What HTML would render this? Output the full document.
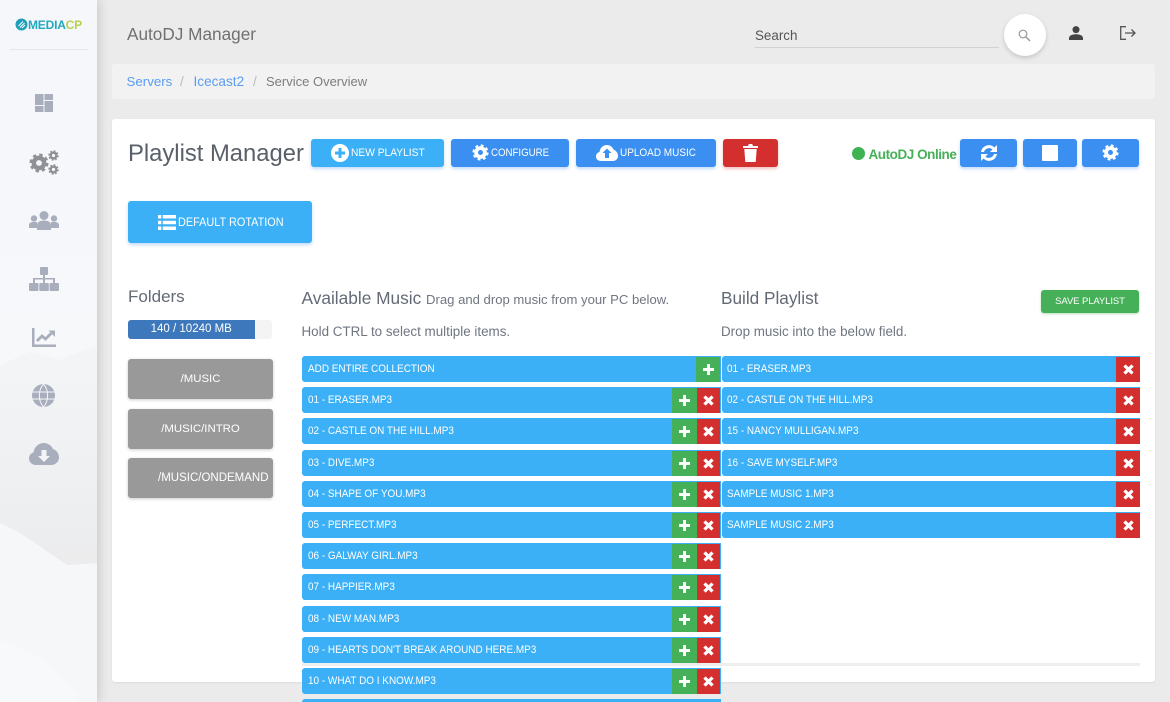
<!DOCTYPE html>
<html><head><meta charset="utf-8"><title>AutoDJ Manager</title>
<style>
*{box-sizing:border-box}
html,body{margin:0;padding:0;width:1170px;height:702px;overflow:hidden}
body{background:#ebebeb;font-family:"Liberation Sans",sans-serif;position:relative}
.a{position:absolute;white-space:nowrap}
svg{display:block}
.btn{position:absolute;border-radius:3px;color:#fff;font-size:11px;display:flex;align-items:center;justify-content:center;box-shadow:0 2px 3px rgba(60,140,240,.3)}
.btn.s{justify-content:flex-start;white-space:nowrap}
.btn.s span{display:inline-block;transform-origin:left center}
.b1{background:#3bb0f6}.b2{background:#3a8ff0}
.row{position:absolute;height:26px;background:#3bb0f6;border-radius:3px 0 0 3px;color:#fff;font-size:11px;line-height:27px;padding-left:6px;white-space:nowrap}
.row b{font-weight:normal;display:inline-block;transform:scaleX(.905);transform-origin:left center}
.l{left:302px;width:419px}.r{left:722px;width:418px}
.p,.x{position:absolute;top:1px;height:25px;color:#fff;font-weight:bold}
.p{background:#46b058;width:25px}.x{background:#d32f2f;width:24px;right:0}
.p svg,.x svg{position:absolute;left:50%;top:50%;margin:-5.5px 0 0 -5.5px}
.l .p{left:370px}
.l .x{left:395px;width:23px}
.r .x{right:0}
.fold{position:absolute;left:128px;width:145px;height:40px;background:#999;border-radius:3px;color:#fff;font-size:11.4px;line-height:41px;text-align:center;box-shadow:0 1px 3px rgba(0,0,0,.2)}
.si{position:absolute;color:#a9aebd}
</style></head>
<body>
<svg width="0" height="0" style="position:absolute">
<defs>
<symbol id="gear" viewBox="0 0 24 24"><circle cx="12" cy="12" r="6.2" fill="none" stroke="currentColor" stroke-width="5.4"/><circle cx="12" cy="12" r="9.6" fill="none" stroke="currentColor" stroke-width="3.6" stroke-dasharray="3.9 3.64"/></symbol>
<symbol id="plus" viewBox="0 0 11 11"><path d="M5.5 0v11M0 5.5h11" stroke="currentColor" stroke-width="3" fill="none"/></symbol>
<symbol id="times" viewBox="0 0 11 11"><path d="M1.5 1.500l8 8M9.500 1.500l-8 8" stroke="currentColor" stroke-width="3.300" fill="none"/></symbol>
</defs>
</svg>

<!-- Sidebar -->
<div class="a" style="left:0;top:0;width:97px;height:702px;background:#f6f8fa;box-shadow:3px 0 9px rgba(0,0,0,.13);overflow:hidden">
<svg width="97" height="702" style="position:absolute;left:0;top:0">
<defs><linearGradient id="sg" x1="0" y1="0" x2="0" y2="1"><stop offset="0" stop-color="#f5f7fa"/><stop offset="1" stop-color="#f7f8fa"/></linearGradient>
<linearGradient id="mt" x1="0" y1="0" x2="0" y2="1"><stop offset="0" stop-color="#f3f5f7"/><stop offset=".55" stop-color="#eef0f2"/><stop offset="1" stop-color="#ebebec"/></linearGradient></defs>
<rect width="97" height="702" fill="url(#sg)"/>
<path d="M0 365L30 352L60 360L97 345V580H0Z" fill="url(#mt)"/>
<path d="M0 523C28 535 50 555 68 565L97 563V702H0Z" fill="#f6f7f9"/>
<path d="M0 640C30 650 60 665 80 702H0Z" fill="#f8f9fa"/>
</svg>
<svg class="a" style="left:15px;top:18px" width="13" height="13" viewBox="0 0 13 13"><circle cx="6.500" cy="6.500" r="6" fill="#20a0b8"/><path d="M3.500 8L8 3.500M5 9.500L9.500 5M7 10L10 7" stroke="#fff" stroke-width="1"/></svg>
<div class="a" style="left:28px;top:17.500px;font-size:12px;font-weight:bold;line-height:14px;color:#22a9c0;letter-spacing:-.2px">MEDIA<span style="color:#b5d24a">CP</span></div>
<div class="a" style="left:10px;top:49px;width:78px;height:1px;background:#e4e6e9"></div>

<svg class="si" style="left:35px;top:94px" width="18" height="18" viewBox="0 0 18 18"><path d="M0 0h8.500v11H0zM9.500 0H18v6H9.500zM9.500 7H18v11H9.500zM0 12h8.500v6H0z" fill="currentColor"/></svg>

<svg class="si" style="left:29px;top:150px;color:#8f9196" width="30" height="25" viewBox="0 0 30 25"><use href="#gear" x="0" y="3" width="20" height="20"/><use href="#gear" x="19" y="0" width="11" height="11"/><use href="#gear" x="19" y="14" width="11" height="11"/></svg>

<svg class="si" style="left:29px;top:211px" width="30" height="19" viewBox="0 0 30 19"><g fill="currentColor"><circle cx="15" cy="4.500" r="4.500"/><path d="M8 19v-5c0-3 3-4.500 7-4.500s7 1.500 7 4.500v5z"/><circle cx="5" cy="7.500" r="3.200"/><circle cx="25" cy="7.500" r="3.200"/><path d="M0 17v-3c0-2 2-3 4-3h4v6zM30 17v-3c0-2-2-3-4-3h-4v6z"/></g></svg>

<svg class="si" style="left:29px;top:267px" width="30" height="24" viewBox="0 0 30 24"><g fill="currentColor"><rect x="11" y="0" width="8" height="8" rx="1"/><rect x="0" y="16" width="9.500" height="8" rx="1"/><rect x="10.300" y="16" width="9.500" height="8" rx="1"/><rect x="20.500" y="16" width="9.500" height="8" rx="1"/><path d="M14 8h2v3h10v5h-2v-3.500H16V16h-2v-3.500H6V16H4v-5h10z"/></g></svg>

<svg class="si" style="left:32px;top:328px" width="24" height="19" viewBox="0 0 24 19"><path d="M0 0h2.500v16.500H24V19H0z" fill="currentColor"/><path d="M5 13l5-5 3.500 3L20 4.500" stroke="currentColor" stroke-width="2.800" fill="none"/><path d="M16.500 2.500H23V9z" fill="currentColor"/></svg>

<svg class="si" style="left:32px;top:384px" width="23" height="23" viewBox="0 0 23 23"><circle cx="11.500" cy="11.500" r="11.500" fill="currentColor"/><path d="M0 8h23M0 15h23M11.500 0C6 6 6 17 11.500 23M11.500 0C17 6 17 17 11.500 23" stroke="#f3f5f7" stroke-width="1" fill="none"/></svg>

<svg class="si" style="left:29px;top:443px" width="30" height="22" viewBox="0 0 30 22"><path d="M7 22C3 22 0 19 0 15.500 0 12.500 2 10 4.500 9.500 5 4 9.500 0 15 0c4 0 7.500 2.500 9 6 3.500 1 6 4.500 6 8.500 0 4-3.500 7.500-7.500 7.500z" fill="currentColor"/><path d="M12.500 7h5v6h3.500L15 19l-6-6h3.500z" fill="#f2f4f6"/></svg>
</div>

<!-- Header -->
<div class="a" style="left:127px;top:24px;font-size:17.200px;line-height:21px;color:#707070">AutoDJ Manager</div>
<div class="a" style="left:755px;top:28px;font-size:13.400px;line-height:15px;color:#555">Search</div>
<div class="a" style="left:755px;top:47px;width:244px;height:1px;background:#d2d2d2"></div>
<div class="a" style="left:1004px;top:14px;width:42px;height:42px;border-radius:50%;background:#fff;box-shadow:0 2px 5px rgba(0,0,0,.16)"></div>
<svg class="a" style="left:1018px;top:29px" width="13" height="13" viewBox="0 0 13 13"><circle cx="5" cy="5" r="3.800" stroke="#999" stroke-width="1.200" fill="none"/><path d="M8 8l4 4" stroke="#999" stroke-width="1.500"/></svg>
<svg class="a" style="left:1069px;top:26px" width="14" height="14" viewBox="0 0 14 14"><circle cx="7" cy="3.600" r="3.500" fill="#444"/><path d="M0 14v-2c0-2.500 4-3.700 7-3.700s7 1.200 7 3.700v2z" fill="#444"/></svg>
<svg class="a" style="left:1120px;top:26px" width="16" height="14" viewBox="0 0 16 14"><path d="M6 .700H.700v12.600H6" stroke="#555" stroke-width="1.300" fill="none"/><path d="M5 7h10M11.500 3.500L15 7l-3.500 3.500" stroke="#555" stroke-width="1.300" fill="none"/></svg>

<!-- Breadcrumb -->
<div class="a" style="left:112px;top:64px;width:1043px;height:35px;background:#f2f2f2;border-radius:3px"></div>
<div class="a" style="left:126.500px;top:74px;font-size:13.300px;line-height:16px;color:#5a9df0">Servers</div>
<div class="a" style="left:180px;top:74px;font-size:13.500px;line-height:16px;color:#bbb">/</div>
<div class="a" style="left:193.500px;top:74px;font-size:13.600px;line-height:16px;color:#5a9df0">Icecast2</div>
<div class="a" style="left:253px;top:74px;font-size:13.500px;line-height:16px;color:#bbb">/</div>
<div class="a" style="left:266px;top:74px;font-size:13px;line-height:16px;color:#7d7d7d">Service Overview</div>

<!-- Card -->
<div class="a" style="left:112px;top:119px;width:1043px;height:563px;background:#fff;border-radius:3px;box-shadow:0 1px 2px rgba(0,0,0,.07)"></div>
<div class="a" style="left:128px;top:139px;font-size:23.800px;line-height:30px;color:#59606a">Playlist Manager</div>

<div class="btn b1 s" style="left:311px;top:138.500px;width:132.500px;height:28px;padding-left:20px"><svg width="18" height="18" viewBox="0 0 18 18" style="margin-right:2px"><circle cx="9" cy="9" r="9" fill="#fff"/><path d="M9 4v10M4 9h10" stroke="#3bb0f6" stroke-width="3"/></svg><span style="transform:scaleX(.93)">NEW PLAYLIST</span></div>
<div class="btn b2 s" style="left:451px;top:138.500px;width:117.500px;height:28px;padding-left:20.500px"><svg width="17" height="17" style="margin-right:2.500px"><use href="#gear" width="17" height="17"/></svg><span style="transform:scaleX(.88)">CONFIGURE</span></div>
<div class="btn b2 s" style="left:576px;top:138.500px;width:140px;height:28px;padding-left:20px"><svg width="22" height="16" viewBox="0 0 22 16" style="margin-right:2px"><path d="M5 16C2 16 0 14 0 11.500 0 9 1.500 7.500 3.500 7 4 3 7 0 11 0c3 0 5.500 2 6.500 4.500C20 5.500 22 8 22 11c0 3-2.500 5-5 5z" fill="#fff"/><path d="M11 3.500L15.500 8H13v5H9V8H6.500z" fill="#3a8ff0"/></svg><span style="transform:scaleX(.907)">UPLOAD MUSIC</span></div>
<div class="btn" style="left:723px;top:138.500px;width:55px;height:28px;background:#d32f2f;box-shadow:0 2px 3px rgba(211,47,47,.3)"><svg width="15" height="18" viewBox="0 0 15 18"><path d="M0 2h5l.8-2h3.400l.8 2h5v2H0zM1.300 5h12.400l-1 13H2.300z" fill="#fff"/></svg></div>

<div class="a" style="left:851.500px;top:147px;width:13px;height:13px;border-radius:50%;background:#3fb254"></div>
<div class="a" style="left:868.500px;top:146px;font-size:13.500px;font-weight:bold;line-height:17px;color:#46b058;letter-spacing:-.45px">AutoDJ Online</div>
<div class="btn b2" style="left:960px;top:138.500px;width:57px;height:28px"><svg width="20" height="20" viewBox="0 0 20 20"><path d="M2 9A8 8 0 0 1 15.500 4.500L18 2v7h-7l2.600-2.600A5.300 5.300 0 0 0 5 9zM18 11A8 8 0 0 1 4.500 15.500L2 18v-7h7l-2.600 2.600A5.300 5.300 0 0 0 15 11z" fill="#fff"/></svg></div>
<div class="btn b2" style="left:1023px;top:138.500px;width:54px;height:28px"><div style="width:16px;height:16px;background:#fff;border-radius:1px"></div></div>
<div class="btn b2" style="left:1082px;top:138.500px;width:57px;height:28px"><svg width="17" height="17"><use href="#gear" width="17" height="17"/></svg></div>

<div class="btn b1 s" style="left:128px;top:201px;width:184px;height:42px;font-size:12px;padding-left:30px"><svg width="18" height="15" viewBox="0 0 19 15" style="margin-right:2px" preserveAspectRatio="none"><path d="M0 0h3.500v3.500H0zM5 0h14v3.500H5zM0 5.700h3.500v3.500H0zM5 5.700h14v3.500H5zM0 11.500h3.500V15H0zM5 11.500h14V15H5z" fill="#fff"/></svg><span style="transform:scaleX(.907)">DEFAULT ROTATION</span></div>

<!-- Folders -->
<div class="a" style="left:128px;top:287px;font-size:17px;line-height:20px;color:#636a76">Folders</div>
<div class="a" style="left:128px;top:320px;width:144px;height:19px;background:#f4f4f4;border-radius:3px;overflow:hidden"><div style="width:126.500px;height:19px;background:#3d78bc;color:#fff;font-size:11.500px;line-height:19px;text-align:center">140 / 10240 MB</div></div>
<div class="fold" style="top:359px">/MUSIC</div>
<div class="fold" style="top:408.500px">/MUSIC/INTRO</div>
<div class="fold" style="top:458px;padding-left:30px;text-align:left;font-size:11.500px">/MUSIC/ONDEMAND</div>

<!-- Available -->
<div class="a" style="left:301.500px;top:288px;line-height:20px;font-size:17.300px;color:#636a76">Available Music <span style="font-size:13.100px;color:#6f7680">Drag and drop music from your PC below.</span></div>
<div class="a" style="left:301.500px;top:323px;font-size:13.400px;line-height:17px;color:#6f7680">Hold CTRL to select multiple items.</div>
<div class="a" style="left:721px;top:288px;font-size:17.200px;line-height:20px;color:#636a76">Build Playlist</div>
<div class="a" style="left:721px;top:323px;font-size:13.400px;line-height:17px;color:#6f7680">Drop music into the below field.</div>
<div class="btn" style="left:1041px;top:289.500px;width:98px;height:23px;background:#46b058;font-size:9.500px;letter-spacing:-.1px;box-shadow:0 1px 2px rgba(70,176,88,.4)">SAVE PLAYLIST</div>

<div class="a" style="left:302px;top:663px;width:838px;height:3px;background:#eeeeee"></div>

<!-- Left rows -->
<div class="row l" style="top:356px"><b>ADD ENTIRE COLLECTION</b><span class="p" style="left:394px;width:24px"><svg width="11" height="11"><use href="#plus"/></svg></span></div>
<div class="row l" style="top:387.200px"><b>01 - ERASER.MP3</b><span class="p"><svg width="11" height="11"><use href="#plus"/></svg></span><span class="x"><svg width="11" height="11"><use href="#times"/></svg></span></div>
<div class="row l" style="top:418.400px"><b>02 - CASTLE ON THE HILL.MP3</b><span class="p"><svg width="11" height="11"><use href="#plus"/></svg></span><span class="x"><svg width="11" height="11"><use href="#times"/></svg></span></div>
<div class="row l" style="top:449.600px"><b>03 - DIVE.MP3</b><span class="p"><svg width="11" height="11"><use href="#plus"/></svg></span><span class="x"><svg width="11" height="11"><use href="#times"/></svg></span></div>
<div class="row l" style="top:480.800px"><b>04 - SHAPE OF YOU.MP3</b><span class="p"><svg width="11" height="11"><use href="#plus"/></svg></span><span class="x"><svg width="11" height="11"><use href="#times"/></svg></span></div>
<div class="row l" style="top:512px"><b>05 - PERFECT.MP3</b><span class="p"><svg width="11" height="11"><use href="#plus"/></svg></span><span class="x"><svg width="11" height="11"><use href="#times"/></svg></span></div>
<div class="row l" style="top:543.200px"><b>06 - GALWAY GIRL.MP3</b><span class="p"><svg width="11" height="11"><use href="#plus"/></svg></span><span class="x"><svg width="11" height="11"><use href="#times"/></svg></span></div>
<div class="row l" style="top:574.400px"><b>07 - HAPPIER.MP3</b><span class="p"><svg width="11" height="11"><use href="#plus"/></svg></span><span class="x"><svg width="11" height="11"><use href="#times"/></svg></span></div>
<div class="row l" style="top:605.600px"><b>08 - NEW MAN.MP3</b><span class="p"><svg width="11" height="11"><use href="#plus"/></svg></span><span class="x"><svg width="11" height="11"><use href="#times"/></svg></span></div>
<div class="row l" style="top:636.800px"><b>09 - HEARTS DON'T BREAK AROUND HERE.MP3</b><span class="p"><svg width="11" height="11"><use href="#plus"/></svg></span><span class="x"><svg width="11" height="11"><use href="#times"/></svg></span></div>
<div class="row l" style="top:668px"><b>10 - WHAT DO I KNOW.MP3</b><span class="p"><svg width="11" height="11"><use href="#plus"/></svg></span><span class="x"><svg width="11" height="11"><use href="#times"/></svg></span></div>
<div class="row l" style="top:699.200px"></div>

<!-- Right rows -->
<div class="row r" style="top:356px;padding-left:5px"><b>01 - ERASER.MP3</b><span class="x"><svg width="11" height="11"><use href="#times"/></svg></span></div>
<div class="row r" style="top:387.200px;padding-left:5px"><b>02 - CASTLE ON THE HILL.MP3</b><span class="x"><svg width="11" height="11"><use href="#times"/></svg></span></div>
<div class="row r" style="top:418.400px;padding-left:5px"><b>15 - NANCY MULLIGAN.MP3</b><span class="x"><svg width="11" height="11"><use href="#times"/></svg></span></div>
<div class="row r" style="top:449.600px;padding-left:5px"><b>16 - SAVE MYSELF.MP3</b><span class="x"><svg width="11" height="11"><use href="#times"/></svg></span></div>
<div class="row r" style="top:480.800px;padding-left:5px"><b>SAMPLE MUSIC 1.MP3</b><span class="x"><svg width="11" height="11"><use href="#times"/></svg></span></div>
<div class="row r" style="top:512px;padding-left:5px"><b>SAMPLE MUSIC 2.MP3</b><span class="x"><svg width="11" height="11"><use href="#times"/></svg></span></div>
</body></html>
